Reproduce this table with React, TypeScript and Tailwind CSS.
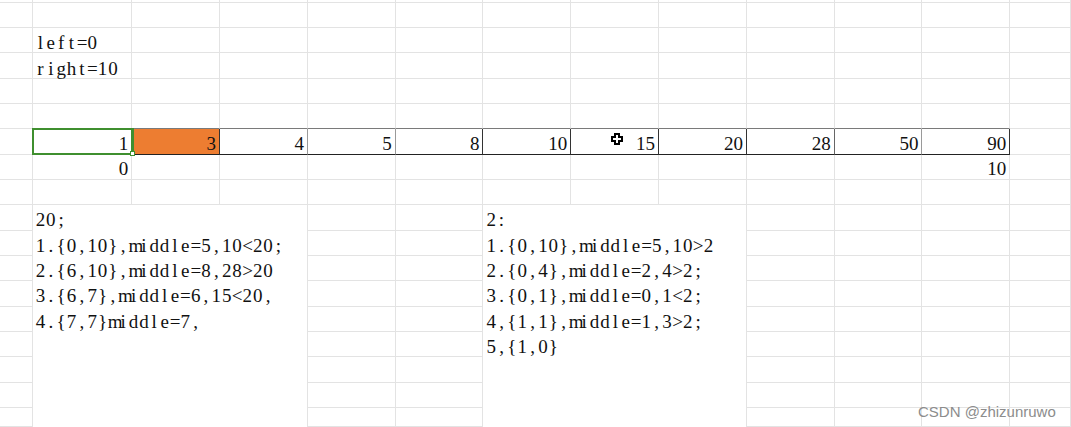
import React from 'react';

function Mono({ text }: { text: string }) {
  return (
    <span className="whitespace-nowrap">
      {Array.from(text).map((ch, i) => (
        <span key={i} className="inline-block w-[10.35px] text-center">
          {ch}
        </span>
      ))}
    </span>
  );
}

const dataValues = ['1', '3', '4', '5', '8', '10', '15', '20', '28', '50', '90'];
const dataRight = [
  'border-r-[#3f8f2f]',
  'border-r-[#333333]',
  'border-r-[#9a9a9a]',
  'border-r-[#9a9a9a]',
  'border-r-[#333333]',
  'border-r-[#333333]',
  'border-r-[#333333]',
  'border-r-[#333333]',
  'border-r-[#666666]',
  'border-r-[#9a9a9a]',
  'border-r-[#333333]',
];

const block1 = ['20;', '1.{0,10},middle=5,10<20;', '2.{6,10},middle=8,28>20', '3.{6,7},middle=6,15<20,', '4.{7,7}middle=7,'];
const block2 = ['2:', '1.{0,10},middle=5,10>2', '2.{0,4},middle=2,4>2;', '3.{0,1},middle=0,1<2;', '4,{1,1},middle=1,3>2;', '5,{1,0}'];

function CursorIcon() {
  return (
    <svg viewBox="0 0 12 12" className="absolute left-[39.5px] top-[3.5px] w-[12px] h-[12px]">
      <polygon
        points="4,1 8,1 8,4 11,4 11,8 8,8 8,11 4,11 4,8 1,8 1,4 4,4"
        fill="#ffffff"
        stroke="#000000"
        strokeWidth="2"
        strokeLinejoin="miter"
      />
    </svg>
  );
}

export default function App() {
  const items: React.ReactNode[] = [];
  const base = 'border-r border-b border-[#e3e3e3]';

  for (let r = 1; r <= 18; r++) {
    for (let c = 1; c <= 13; c++) {
      const key = `${r}-${c}`;
      if (r >= 10 && ((c >= 2 && c <= 4) || (c >= 7 && c <= 9))) continue;

      if (r === 7 && c >= 2 && c <= 12) {
        const idx = c - 2;
        const val = dataValues[idx];
        const isB = c === 2;
        const isC = c === 3;
        const isH = c === 8;
        items.push(
          <div
            key={key}
            className={`border-r border-b border-b-[#222222] ${dataRight[idx]} flex items-end justify-end pr-[3px] pb-[1px] leading-[19px] ${
              isC ? 'bg-[#ed7d31]' : ''
            } ${isB || isH ? 'relative' : ''}`}
          >
            <span>{val}</span>
            {isB && (
              <div className="absolute left-[-1px] top-[-1px] w-[102px] h-[27px] border-2 border-[#3f8f2f] pointer-events-none">
                <div className="absolute right-[-3px] bottom-[-3px] w-[5px] h-[5px] bg-white border border-[#3f8f2f]" />
              </div>
            )}
            {isH && <CursorIcon />}
          </div>
        );
        continue;
      }

      if (r === 6 && c >= 2 && c <= 12) {
        items.push(<div key={key} className={`${base} border-b-[#7a7a7a]`} />);
        continue;
      }

      if ((r === 3 || r === 4) && c === 2) {
        items.push(
          <div key={key} className={`${base} flex items-end pl-[2px] leading-[19px] whitespace-nowrap`}>
            <Mono text={r === 3 ? 'left=0' : 'right=10'} />
          </div>
        );
        continue;
      }

      if (r === 8 && (c === 2 || c === 12)) {
        items.push(
          <div key={key} className={`${base} flex items-end justify-end pr-[3px] pb-[1px] leading-[19px]`}>
            <span>{c === 2 ? '0' : '10'}</span>
          </div>
        );
        continue;
      }

      items.push(<div key={key} className={base} />);
    }
  }

  return (
    <div className="relative w-[1071px] h-[427px] overflow-hidden bg-white text-[#111111] text-[19px] font-['Liberation_Serif',serif] grid grid-cols-[33.3px_99px_repeat(10,87.8px)_1fr] grid-rows-[2.67px_repeat(16,25.33px)_1fr]">
      <div className="col-start-2 col-end-5 row-start-10 row-end-19 border-r border-[#e3e3e3] bg-white pl-[2px] pt-[2px] leading-[25.33px]">
        {block1.map((t, i) => (
          <div key={i} className="h-[25.33px]">
            <Mono text={t} />
          </div>
        ))}
      </div>
      <div className="col-start-7 col-end-10 row-start-10 row-end-19 border-r border-[#e3e3e3] bg-white pl-[2.5px] pt-[2px] leading-[25.33px]">
        {block2.map((t, i) => (
          <div key={i} className="h-[25.33px]">
            <Mono text={t} />
          </div>
        ))}
      </div>
      {items}
      <div className="absolute left-[918px] top-[404px] text-[15px] leading-[15px] font-['Liberation_Sans',Arial,sans-serif] text-[#8c8c8c] whitespace-nowrap">
        CSDN @zhizunruwo
      </div>
    </div>
  );
}
